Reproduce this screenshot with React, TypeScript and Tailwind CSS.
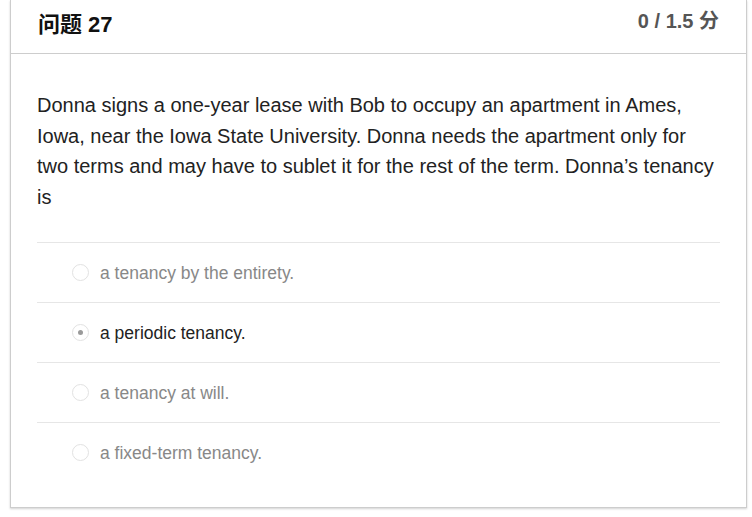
import React from "react";

const OPTIONS = [
  { label: "a tenancy by the entirety.", selected: false },
  { label: "a periodic tenancy.", selected: true },
  { label: "a tenancy at will.", selected: false },
  { label: "a fixed-term tenancy.", selected: false },
];

const FONT = { fontFamily: '"Liberation Sans", Arial, "Noto Sans CJK SC", sans-serif' };

export default function App() {
  return (
    <div className="min-h-screen bg-white pl-[10px]" style={FONT}>
      <div className="w-[737px] border-x border-b border-[#cdcdcd] bg-white shadow-[0_1px_2px_rgba(0,0,0,0.18)]">
        {/* header */}
        <div className="flex h-[54px] justify-between border-b border-[#cdcdcd] px-[27px]">
          <h2 className="mt-[12px] text-[22px] font-bold leading-[26px] text-[#111]">问题 27</h2>
          <div className="mt-[9px] text-[20px] font-bold leading-[24px] text-[#555]">0 / 1.5 分</div>
        </div>

        {/* question body */}
        <div className="px-[26px] pt-[36px] pb-[25px]">
          <p className="text-[20px] leading-[30.5px] text-[#222]">
            Donna signs a one-year lease with Bob to occupy an apartment in Ames, Iowa, near the
            Iowa State University. Donna needs the apartment only for two terms and may have to
            sublet it for the rest of the term. Donna’s tenancy is
          </p>

          <ul className="mt-[30px]">
            {OPTIONS.map((o) => (
              <li
                key={o.label}
                className="flex h-[60px] items-center gap-[11px] border-t border-[#e6e6e6] pl-[35px]"
              >
                <span className="flex h-[17px] w-[17px] items-center justify-center rounded-full border border-[#e2e2e2] bg-white">
                  {o.selected && <span className="h-[5px] w-[5px] rounded-full bg-[#9a9a9a]" />}
                </span>
                <span className={`mt-[2px] text-[17.5px] ${o.selected ? "text-[#222]" : "text-[#888]"}`}>
                  {o.label}
                </span>
              </li>
            ))}
          </ul>
        </div>
      </div>
    </div>
  );
}
